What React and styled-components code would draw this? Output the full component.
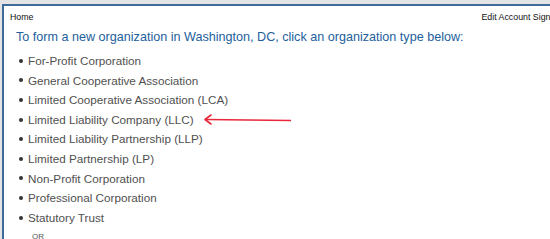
import React from "react";
import styled, { createGlobalStyle } from "styled-components";

const Global = createGlobalStyle`
    html, body {
        margin: 0;
        padding: 0;
        background: #e4e4e4;
        overflow: hidden;
        font-family: "Liberation Sans", Arial, sans-serif;
    }
`;

const Page = styled.div`
    padding: 4px 0 0 2px;
`;

const Panel = styled.div`
    width: 600px;
    height: 240px;
    background: #ffffff;
    border-top: 2px solid #3e6b98;
    border-left: 2px solid #3e6b98;
    box-sizing: border-box;
`;

const TopBar = styled.div`
    display: flex;
    gap: 448px;
    padding: 5px 0 0 6px;
    font-size: 8.8px;
    line-height: 12px;
    color: #111;
    white-space: nowrap;
`;

const Heading = styled.div`
    margin: 5px 0 0 12px;
    font-size: 12.6px;
    line-height: 18px;
    color: #23609c;
`;

const TypeList = styled.ul`
    list-style: none;
    margin: 5px 0 0;
    padding: 0 0 0 15px;
`;

const TypeItem = styled.li`
    display: flex;
    align-items: center;
    font-size: 11.7px;
    line-height: 19.6px;
    color: #505050;

    &::before {
        content: "";
        width: 4px;
        height: 4px;
        border-radius: 50%;
        background: #333;
        margin-right: 5px;
        flex-shrink: 0;
    }
`;

const Or = styled.div`
    margin: 5px 0 0 28px;
    font-size: 8px;
    line-height: 10px;
    color: #555;
`;

const Arrow = styled.svg`
    margin-left: 9px;
    display: block;
`;

const types = [
    "For-Profit Corporation",
    "General Cooperative Association",
    "Limited Cooperative Association (LCA)",
    "Limited Liability Company (LLC)",
    "Limited Liability Partnership (LLP)",
    "Limited Partnership (LP)",
    "Non-Profit Corporation",
    "Professional Corporation",
    "Statutory Trust",
];

const App = () => (
    <Page>
        <Global />
        <Panel>
            <TopBar>
                <span>Home</span>
                <span>Edit Account Sign Out</span>
            </TopBar>
            <Heading>To form a new organization in Washington, DC, click an organization type below:</Heading>
            <TypeList>
                {types.map((t) => (
                    <TypeItem key={t}>
                        {t}
                        {t.includes("(LLC)") && (
                            <Arrow width="90" height="12" viewBox="0 0 90 12">
                                <path d="M2 5.5 L88 6.5" stroke="#e8283a" strokeWidth="1.6" fill="none" />
                                <path d="M8 1 L2 5.5 L8 10" stroke="#e8283a" strokeWidth="1.6" fill="none" strokeLinecap="round" strokeLinejoin="round" />
                            </Arrow>
                        )}
                    </TypeItem>
                ))}
            </TypeList>
            <Or>OR</Or>
        </Panel>
    </Page>
);

export default App;
